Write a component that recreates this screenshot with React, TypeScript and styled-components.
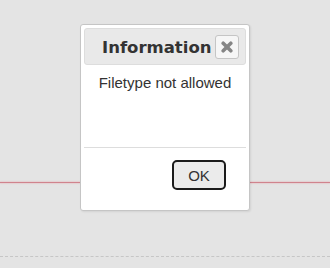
import React from "react";
import styled, { createGlobalStyle } from "styled-components";

const Global = createGlobalStyle`
  html, body { margin: 0; padding: 0; }
  body {
    background: #e4e4e4;
    width: 330px;
    height: 268px;
    overflow: hidden;
    font-family: "Liberation Sans", Arial, sans-serif;
  }
`;

const Page = styled.div`
  position: relative;
  width: 330px;
  height: 268px;
  padding-top: 182px;
  box-sizing: border-box;
  display: flex;
  flex-direction: column;
`;

const RedRule = styled.div`
  height: 1px;
  background: #d0838d;
  box-shadow: 0 0 1px 0.5px rgba(230, 170, 178, 0.6);
`;

const DashedRule = styled.div`
  margin-top: 73px;
  border-top: 1px dashed #c6c6c6;
`;

const Dialog = styled.div`
  position: absolute;
  left: 80px;
  top: 24px;
  width: 170px;
  box-sizing: border-box;
  background: #ffffff;
  border: 1px solid #c5c5c5;
  border-radius: 3px;
  padding: 3px;
  box-shadow: 1px 1px 2px rgba(0, 0, 0, 0.08);
`;

const TitleBar = styled.div`
  height: 37px;
  box-sizing: border-box;
  background: #e9e9e9;
  border: 1px solid #dddddd;
  border-radius: 3px;
  display: flex;
  align-items: center;
  padding: 0 6px 0 17px;
`;

const Title = styled.span`
  flex: 1;
  font-family: "DejaVu Sans", Verdana, sans-serif;
  font-weight: bold;
  font-size: 16.5px;
  color: #333333;
  white-space: nowrap;
  line-height: 20px;
  padding-top: 2px;
`;

const CloseButton = styled.button`
  width: 24px;
  height: 24px;
  box-sizing: border-box;
  border: 1px solid #c5c5c5;
  border-radius: 3px;
  background: #f6f6f6;
  padding: 0;
  display: flex;
  align-items: center;
  justify-content: center;
`;

const Content = styled.div`
  height: 82px;
  box-sizing: border-box;
  padding-top: 9px;
  text-align: center;
  font-size: 15px;
  line-height: 18px;
  color: #333333;
`;

const ButtonPane = styled.div`
  border-top: 1px solid #dddddd;
  padding: 12px 20px 17px 0;
  display: flex;
  justify-content: flex-end;
`;

const OkButton = styled.button`
  width: 54px;
  height: 30px;
  box-sizing: border-box;
  border: 2px solid #1b1b1b;
  border-radius: 5px;
  background: #ebebeb;
  font-family: "Liberation Sans", Arial, sans-serif;
  font-size: 15px;
  color: #333333;
  padding: 0;
`;

export default function App() {
  return (
    <>
      <Global />
      <Page>
        <RedRule />
        <DashedRule />
        <Dialog>
          <TitleBar>
            <Title>Information</Title>
            <CloseButton aria-label="close">
              <svg width="12" height="12" viewBox="0 0 12 12">
                <path
                  d="M2.2 2.2 L9.8 9.8 M9.8 2.2 L2.2 9.8"
                  stroke="#858585"
                  strokeWidth="3.6"
                  strokeLinecap="round"
                />
              </svg>
            </CloseButton>
          </TitleBar>
          <Content>Filetype not allowed</Content>
          <ButtonPane>
            <OkButton>OK</OkButton>
          </ButtonPane>
        </Dialog>
      </Page>
    </>
  );
}
